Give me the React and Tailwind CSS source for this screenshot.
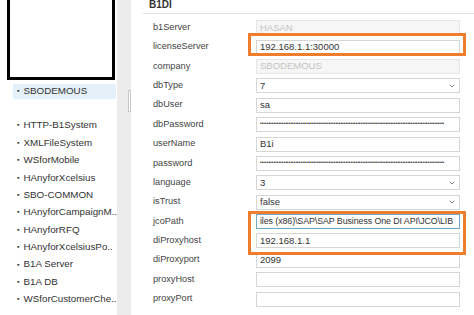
import { ChevronDown } from 'lucide-react'

const services = [
  'HTTP-B1System',
  'XMLFileSystem',
  'WSforMobile',
  'HAnyforXcelsius',
  'SBO-COMMON',
  'HAnyforCampaignM..',
  'HAnyforRFQ',
  'HAnyforXcelsiusPo..',
  'B1A Server',
  'B1A DB',
  'WSforCustomerChe..',
]

const fields = [
  { label: 'b1Server', value: 'HASAN', disabled: true },
  { label: 'licenseServer', value: '192.168.1.1:30000' },
  { label: 'company', value: 'SBODEMOUS', disabled: true },
  { label: 'dbType', value: '7', select: true },
  { label: 'dbUser', value: 'sa' },
  { label: 'dbPassword', password: true },
  { label: 'userName', value: 'B1i' },
  { label: 'password', password: true },
  { label: 'language', value: '3', select: true },
  { label: 'isTrust', value: 'false', select: true },
  { label: 'jcoPath', value: 'iles (x86)\\SAP\\SAP Business One DI API\\JCO\\LIB', focused: true },
  { label: 'diProxyhost', value: '192.168.1.1' },
  { label: 'diProxyport', value: '2099' },
  { label: 'proxyHost', value: '' },
  { label: 'proxyPort', value: '' },
]

function Field({ f }) {
  const box = f.disabled
    ? 'bg-[#f6f6f6] border-[#e6e6e6] text-[#c4c4c4]'
    : f.focused
      ? 'bg-white border-[#6fa8c9] text-[#333]'
      : 'bg-white border-[#d6d6d6] text-[#333]'

  return (
    <div className={`flex items-center w-[204px] h-[15px] border px-[3px] overflow-hidden ${box}`}>
      {f.password ? (
        <span className="text-[4.5px] leading-none tracking-[0.1px] whitespace-nowrap text-[#222]">
          {'•'.repeat(110)}
        </span>
      ) : (
        <span className={`flex-1 whitespace-nowrap ${f.focused ? 'text-[8.9px] tracking-[-0.1px]' : 'text-[9.5px]'}`}>
          {f.value}
        </span>
      )}
      {f.select && <ChevronDown size={8} strokeWidth={2.5} className="text-[#666] shrink-0" />}
    </div>
  )
}

export default function App() {
  return (
    <div className="flex w-[474px] h-[315px] overflow-hidden bg-white font-['Liberation_Sans',Arial,sans-serif] text-[#333]">
      {/* Left tree */}
      <div className="flex flex-col w-[117px] shrink-0">
        <div className="ml-[7px] w-[108px] h-[80px] border-x-[3px] border-b-[3px] border-black bg-white" />
        <div className="mt-[4px] ml-[13px] w-[103px] h-[15px] bg-[#e6f0f8] flex items-center pl-[4px] text-[9.8px]">
          <span className="text-[7px] mr-[4px]">▪</span>SBODEMOUS
        </div>
        <ul className="mt-[18px] pl-[17px]">
          {services.map((s) => (
            <li key={s} className="h-[17.4px] flex items-center text-[9.8px] whitespace-nowrap">
              <span className="text-[7px] mr-[4px]">▪</span>
              {s}
            </li>
          ))}
        </ul>
      </div>

      {/* Splitter / scrollbar */}
      <div className="relative w-[14px] shrink-0 bg-[#ececec]">
        <div className="absolute right-[0px] top-[90px] w-[3px] h-[22px] border border-[#c8c8c8] bg-white" />
      </div>

      {/* Right form */}
      <div className="relative flex-1 ml-[12px]">
        <div className="h-[14px] border-b border-[#e2e2e2] pl-[6px] text-[10px] font-bold leading-[10px]">
          B1DI
        </div>
        <div className="pt-[4px]">
          {fields.map((f) => (
            <div key={f.label} className="flex items-center h-[19.4px]">
              <div className="w-[113px] pl-[10px] text-[9.2px] text-[#444]">{f.label}</div>
              <Field f={f} />
            </div>
          ))}
        </div>

        {/* Annotation boxes */}
        <div className="absolute left-[105px] top-[33px] w-[218px] h-[23px] border-[3px] border-[#ee7d2e]" />
        <div className="absolute left-[105px] top-[211px] w-[218px] h-[44px] border-[3px] border-[#ee7d2e]" />
      </div>
    </div>
  )
}
